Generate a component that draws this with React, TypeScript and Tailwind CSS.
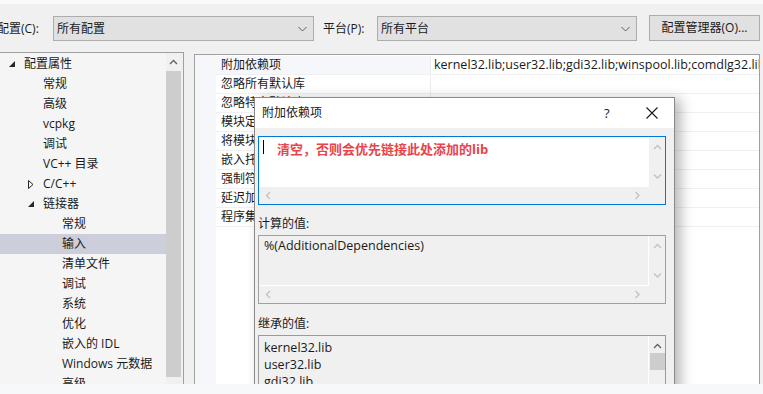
import React from "react";

type Dir = "up" | "down" | "left" | "right";

function Chev({ dir, color = "#c2c2c2" }: { dir: Dir; color?: string }) {
  if (dir === "up" || dir === "down") {
    const pts = dir === "up" ? "1,5 4.5,1.5 8,5" : "1,1.5 4.5,5 8,1.5";
    return (
      <svg width="9" height="7" viewBox="0 0 9 7" className="block">
        <polyline points={pts} fill="none" stroke={color} strokeWidth="1.3" />
      </svg>
    );
  }
  const pts = dir === "left" ? "5,1 1.5,4.5 5,8" : "1.5,1 5,4.5 1.5,8";
  return (
    <svg width="7" height="9" viewBox="0 0 7 9" className="block">
      <polyline points={pts} fill="none" stroke={color} strokeWidth="1.3" />
    </svg>
  );
}

function Combo({ text, w }: { text: string; w: string }) {
  return (
    <div className={`${w} h-[25px] border border-[#adadad] bg-[#e1e1e1] flex items-center pl-[3px] pr-[6px]`}>
      <span className="flex-1">{text}</span>
      <svg width="9" height="6" viewBox="0 0 9 6">
        <polyline points="0.5,1 4.5,5 8.5,1" fill="none" stroke="#606060" strokeWidth="1" />
      </svg>
    </div>
  );
}

function Expanded() {
  return (
    <svg width="6" height="6" viewBox="0 0 6 6" className="block">
      <polygon points="6,0 6,6 0,6" fill="#262626" />
    </svg>
  );
}

function Collapsed() {
  return (
    <svg width="6" height="9" viewBox="0 0 6 9" className="block">
      <polygon points="0.5,0.5 5,4.5 0.5,8.5" fill="none" stroke="#262626" strokeWidth="1" />
    </svg>
  );
}

type TreeItem = { text: string; level: 0 | 1 | 2; icon?: "exp" | "col"; selected?: boolean };

const tree: TreeItem[] = [
  { text: "配置属性", level: 0, icon: "exp" },
  { text: "常规", level: 1 },
  { text: "高级", level: 1 },
  { text: "vcpkg", level: 1 },
  { text: "调试", level: 1 },
  { text: "VC++ 目录", level: 1 },
  { text: "C/C++", level: 1, icon: "col" },
  { text: "链接器", level: 1, icon: "exp" },
  { text: "常规", level: 2 },
  { text: "输入", level: 2, selected: true },
  { text: "清单文件", level: 2 },
  { text: "调试", level: 2 },
  { text: "系统", level: 2 },
  { text: "优化", level: 2 },
  { text: "嵌入的 IDL", level: 2 },
  { text: "Windows 元数据", level: 2 },
  { text: "高级", level: 2 },
];

const props = [
  "附加依赖项",
  "忽略所有默认库",
  "忽略特定默认库",
  "模块定义文件",
  "将模块添加到程序集",
  "嵌入托管资源文件",
  "强制符号引用",
  "延迟加载的 DLL",
  "程序集链接资源",
];

export default function App() {
  return (
    <div className="relative w-[763px] h-[394px] overflow-hidden bg-[#f0f0f0] text-[12px] leading-[16px] text-[#1a1a1a] font-['Open_Sans','Noto_Sans_CJK_SC',sans-serif]">
      <div className="h-[4px] bg-[#fafafa]" />
      {/* top bar */}
      <div className="mt-[11px] h-[26px] flex items-end">
        <span className="ml-[-3px] w-[56px] h-[25px] flex items-center whitespace-nowrap">配置(C):</span>
        <Combo text="所有配置" w="w-[261px]" />
        <span className="ml-[9px] w-[54px] h-[25px] flex items-center whitespace-nowrap">平台(P):</span>
        <Combo text="所有平台" w="w-[260px]" />
        <div className="ml-[12px] w-[111px] h-[26px] border border-[#adadad] bg-[#e1e1e1] flex items-center justify-center whitespace-nowrap">
          配置管理器(O)...
        </div>
      </div>
      {/* main */}
      <div className="mt-[11px] flex items-start">
        {/* tree */}
        <div className="ml-[-1px] w-[185px] h-[360px] border border-[#a0a0a0] bg-[#f5f5f5] flex">
          <div className="flex-1 min-w-0 pt-[1px] overflow-hidden">
            {tree.map((t, i) => (
              <div
                key={i}
                className={`h-[20px] flex items-center whitespace-nowrap ${t.selected ? "bg-[#cccedb]" : ""}`}
              >
                <div
                  className={`${t.level === 0 ? "w-[24px]" : t.level === 1 ? "w-[43px]" : "w-[62px]"} flex justify-end pr-[9px] shrink-0`}
                >
                  {t.icon === "exp" && <Expanded />}
                  {t.icon === "col" && <Collapsed />}
                </div>
                <span>{t.text}</span>
              </div>
            ))}
          </div>
          <div className="w-[17px] shrink-0 bg-[#f0f0f0] flex flex-col">
            <div className="h-[18px] flex items-center justify-center pr-[2px]">
              <Chev dir="up" color="#606060" />
            </div>
            <div className="w-[15px] h-[306px] bg-[#cdcdcd]" />
          </div>
        </div>
        {/* property grid */}
        <div className="ml-[10px] mt-[2px] w-[566px] h-[360px] border border-[#a0a0a0] bg-white flex">
          <div className="w-[21px] shrink-0 bg-[#f5f7fb]" />
          <div className="flex-1 min-w-0 flex flex-col pt-[1px]">
            {props.map((p, i) => (
              <div key={i} className="h-[19px] flex border-b border-[#f0f0f3]">
                <div
                  className={`w-[215px] shrink-0 pl-[5px] flex items-center whitespace-nowrap overflow-hidden border-r border-[#ececf0] ${i === 0 ? "bg-[#f5f7fb]" : ""}`}
                >
                  {p}
                </div>
                <div className="flex-1 min-w-0 pl-[3px] flex items-center whitespace-nowrap overflow-hidden text-[12.5px]">
                  {i === 0 ? "kernel32.lib;user32.lib;gdi32.lib;winspool.lib;comdlg32.lib;advapi32.lib" : ""}
                </div>
              </div>
            ))}
          </div>
        </div>
      </div>

      {/* dialog */}
      <div className="absolute left-[254px] top-[97px] w-[421px] h-[320px] border border-[#8a8a8a] bg-[#f0f0f0] shadow-[6px_2px_12px_rgba(0,0,0,0.28)] flex flex-col">
        <div className="h-[30px] shrink-0 bg-white flex items-center pl-[7px]">
          <span className="flex-1">附加依赖项</span>
          <span className="w-[10px] text-[13px] mr-[32px]">?</span>
          <svg width="12" height="12" viewBox="0 0 12 12" className="mr-[16px]">
            <path d="M0.5 0.5 L11.5 11.5 M11.5 0.5 L0.5 11.5" stroke="#1a1a1a" strokeWidth="1.1" />
          </svg>
        </div>
        <div className="pl-[3px] pr-[8px] pt-[8px]">
          {/* edit box */}
          <div className="h-[69px] border border-[#0078d7] flex flex-col">
            <div className="h-[50px] flex">
              <div className="flex-1 bg-white pt-[3px] pl-[4px] flex items-start">
                <div className="w-px h-[14px] bg-black" />
                <span className="ml-[13px] mt-[1px] font-bold text-[13px] text-[#e8434b] whitespace-nowrap">
                  清空，否则会优先链接此处添加的lib
                </span>
              </div>
              <div className="w-[16px] flex flex-col items-center justify-between py-[7px]">
                <Chev dir="up" />
                <Chev dir="down" />
              </div>
            </div>
            <div className="h-[17px] flex items-center pl-[6px] pr-[24px] justify-between">
              <Chev dir="left" />
              <Chev dir="right" />
            </div>
          </div>

          <div className="mt-[11px] mb-[3px] h-[16px]">计算的值:</div>
          <div className="h-[69px] border border-[#a0a0a0] flex flex-col">
            <div className="h-[50px] flex">
              <div className="flex-1 border-r border-b border-white pt-[2px] pl-[5px] whitespace-nowrap text-[12.5px]">
                %(AdditionalDependencies)
              </div>
              <div className="w-[16px] flex flex-col items-center justify-between py-[7px]">
                <Chev dir="up" />
                <Chev dir="down" />
              </div>
            </div>
            <div className="h-[17px] flex items-center pl-[6px] pr-[24px] justify-between">
              <Chev dir="left" />
              <Chev dir="right" />
            </div>
          </div>

          <div className="mt-[12px] mb-[3px] h-[16px]">继承的值:</div>
          <div className="h-[80px] border border-[#9a9a9a] flex">
            <div className="flex-1 border-r border-white pt-[3px] pl-[5px] leading-[17px] text-[12.5px]">
              <div>kernel32.lib</div>
              <div>user32.lib</div>
              <div>gdi32.lib</div>
              <div>winspool.lib</div>
            </div>
            <div className="w-[16px] flex flex-col items-center pt-[7px]">
              <Chev dir="up" color="#606060" />
              <div className="mt-[3px] w-[15px] h-[17px] bg-[#cdcdcd]" />
            </div>
          </div>
        </div>
      </div>

      {/* bottom strip */}
      <div className="absolute left-0 right-0 bottom-0 h-[10px] bg-[#f7f8fa]" />
    </div>
  );
}
